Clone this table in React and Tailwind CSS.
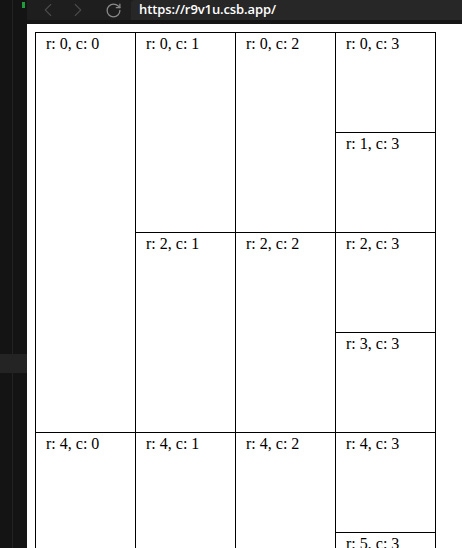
import React from 'react';
import { ChevronLeft, ChevronRight, RotateCw } from 'lucide-react';

// cells: [row, col, rowSpan]
const cells = [
  [0, 0, 4], [0, 1, 2], [0, 2, 2], [0, 3, 1],
  [1, 3, 1],
  [2, 1, 2], [2, 2, 2], [2, 3, 1],
  [3, 3, 1],
  [4, 0, 4], [4, 1, 2], [4, 2, 2], [4, 3, 1],
  [5, 3, 1],
  [6, 1, 2], [6, 2, 2], [6, 3, 1],
  [7, 3, 1],
];

const rowStart = ['row-start-1', 'row-start-2', 'row-start-3', 'row-start-4', 'row-start-5', 'row-start-6', 'row-start-7', 'row-start-8'];
const colStart = ['col-start-1', 'col-start-2', 'col-start-3', 'col-start-4'];
const rowSpan = { 1: 'row-span-1', 2: 'row-span-2', 4: 'row-span-4' };

function Cell({ r, c, span }) {
  return (
    <div className={`${rowStart[r]} ${colStart[c]} ${rowSpan[span]} border-r border-b border-black pl-[10px] pt-[2px] leading-[18px]`}>
      r: {r}, c: {c}
    </div>
  );
}

export default function App() {
  return (
    <div className="flex h-[548px] w-[462px] overflow-hidden bg-[#141414]">
      {/* editor sidebar strip */}
      <div className="relative flex w-[27px] shrink-0 flex-col">
        <div className="absolute left-[12px] top-0 h-full w-px bg-[#232323]" />
        <div className="absolute left-[22px] top-[2px] h-[6px] w-[3px] bg-[#1f9d3a]" />
        <div className="mt-[354px] h-[19px] w-full bg-[#242424]" />
      </div>

      <div className="flex min-w-0 flex-1 flex-col">
        {/* browser toolbar */}
        <div className="flex h-[20px] shrink-0 items-center bg-[#1e1e1e]">
          <ChevronLeft className="ml-[10px] h-[22px] w-[22px] text-[#4a4a4a]" strokeWidth={1.2} />
          <ChevronRight className="ml-[8px] h-[22px] w-[22px] text-[#4a4a4a]" strokeWidth={1.2} />
          <RotateCw className="ml-[16px] h-[17px] w-[17px] text-[#8a8a8a]" strokeWidth={1.8} />
          <div className="ml-[9px] flex h-full flex-1 items-center rounded-tl-[4px] bg-[#272727] pl-[8px] font-['Open_Sans',sans-serif] text-[13px] font-semibold tracking-[-0.1px] text-white">
            https://r9v1u.csb.app/
          </div>
        </div>
        <div className="h-[4px] shrink-0 bg-[#161616]" />

        {/* page */}
        <div className="flex-1 bg-white p-[8px] font-['Liberation_Serif',serif] text-[16px] text-black">
          <div className="grid w-[401px] grid-cols-[repeat(4,100px)] grid-rows-[repeat(8,100px)] border-t border-l border-black">
            {cells.map(([r, c, span]) => (
              <Cell key={`${r}-${c}`} r={r} c={c} span={span} />
            ))}
          </div>
        </div>
      </div>
    </div>
  );
}
